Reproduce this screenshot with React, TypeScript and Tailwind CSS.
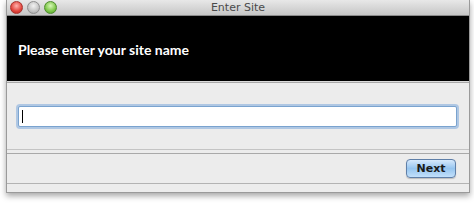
import React from "react";

export default function App() {
  return (
    <div className="w-[474px] h-[204px] bg-white relative overflow-hidden" style={{ fontFamily: '"DejaVu Sans", "Lucida Grande", sans-serif' }}>
      <div className="absolute left-[6px] top-0 w-[464px] h-[193px] border-x border-b border-[#9a9a9a] bg-[#ececec] shadow-[0_3px_6px_rgba(0,0,0,0.35)] flex flex-col">
        {/* title bar */}
        <div className="h-[16px] relative flex items-center bg-gradient-to-b from-[#e8e8e8] to-[#c6c6c6] border-b border-[#8a8a8a]">
          <div className="flex gap-[4px] pl-[3px] items-center">
            <div className="w-[13px] h-[13px] rounded-full bg-[radial-gradient(circle_at_50%_35%,#ffb3ae,#e2443c_60%,#b5261f)] border border-[#a8342e]" />
            <div className="w-[13px] h-[13px] rounded-full bg-[radial-gradient(circle_at_50%_35%,#f2f2f2,#c4c4c4_60%,#9d9d9d)] border border-[#8f8f8f]" />
            <div className="w-[13px] h-[13px] rounded-full bg-[radial-gradient(circle_at_50%_35%,#d8f7b8,#7cc648_60%,#4b9a24)] border border-[#4f8b2e]" />
          </div>
          <div className="absolute inset-0 flex items-center justify-center text-[11px] text-[#4a4a4a] leading-none" style={{ fontFamily: '"DejaVu Sans", sans-serif' }}>
            Enter Site
          </div>
        </div>
        {/* header */}
        <div className="h-[65px] bg-black flex items-center pl-[11px] pt-[1px]">
          <span className="text-white font-bold text-[14px]" style={{ fontFamily: 'Lato, sans-serif' }}>Please enter your site name</span>
        </div>
        <div className="h-[2px] bg-[#dcdcdc] border-b border-[#a9a9a9]" />
        {/* body */}
        <div className="h-[66px] flex items-center px-[11px] pt-[1px]">
          <div className="w-[439px] h-[21px] bg-white border border-[#7aa3cf] rounded-[2px] shadow-[0_0_0_2px_rgba(125,170,220,0.55)] flex items-center pl-[3px]">
            <div className="w-[1px] h-[13px] bg-black" />
          </div>
        </div>
        <div className="h-[5px] border-t border-[#c4c4c4] border-b border-b-[#a9a9a9]" />
        {/* footer */}
        <div className="flex-1 flex flex-col">
          <div className="flex-1 flex items-center justify-end pr-[13px]">
            <button className="w-[50px] h-[19px] rounded-[4px] border border-[#5f7fa8] bg-gradient-to-b from-[#d6e9fc] via-[#96c5ef] to-[#c2e0fb] text-[11px] font-semibold text-[#1a1a1a] leading-none flex items-center justify-center shadow-[0_1px_1px_rgba(0,0,0,0.2)]" style={{ fontFamily: '"DejaVu Sans", sans-serif' }}>
              Next
            </button>
          </div>
          <div className="h-[9px] border-t border-[#b3b3b3]" />
        </div>
      </div>
    </div>
  );
}
